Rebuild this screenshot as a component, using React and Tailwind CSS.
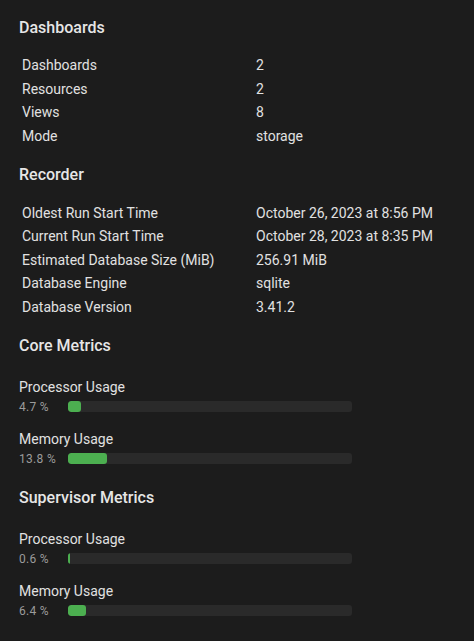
const dashboards = [
  ['Dashboards', '2'],
  ['Resources', '2'],
  ['Views', '8'],
  ['Mode', 'storage'],
]

const recorder = [
  ['Oldest Run Start Time', 'October 26, 2023 at 8:56 PM'],
  ['Current Run Start Time', 'October 28, 2023 at 8:35 PM'],
  ['Estimated Database Size (MiB)', '256.91 MiB'],
  ['Database Engine', 'sqlite'],
  ['Database Version', '3.41.2'],
]

function InfoTable({ rows }) {
  return (
    <div className="pl-[3px]">
      {rows.map(([label, value]) => (
        <div key={label} className="flex h-[23.5px] items-center text-[14px] text-[#e1e1e1]">
          <div className="w-[234px] shrink-0">{label}</div>
          <div>{value}</div>
        </div>
      ))}
    </div>
  )
}

function Metric({ label, value }) {
  return (
    <div className="h-[52px]">
      <div className="h-5 text-[14px] leading-5 text-[#e1e1e1]">{label}</div>
      <div className="flex h-5 items-center">
        <div className="w-[49px] shrink-0 text-[12px] tracking-[0.3px] text-[#9b9b9b]">{value.toFixed(1)} %</div>
        <div className="-mt-px h-[11px] w-[284px] overflow-hidden rounded-[3px] bg-[#2a2a2a]">
          <div className="h-full rounded-[3px] bg-[#4caf50]" style={{ width: `${Math.max(value, 0.6)}%` }} />
        </div>
      </div>
    </div>
  )
}

export default function App() {
  return (
    <div
      className="min-h-[641px] w-full bg-[#1c1c1c] px-[19px] pt-[16px]"
      style={{ fontFamily: 'Roboto, "Noto Sans", sans-serif' }}
    >
      <h2 className="h-6 text-[16px] font-medium leading-6 text-[#e6e6e6]">Dashboards</h2>
      <div className="mt-[14px]">
        <InfoTable rows={dashboards} />
      </div>

      <h2 className="mt-[14.5px] h-6 text-[16px] font-medium leading-6 text-[#e6e6e6]">Recorder</h2>
      <div className="mt-[15px]">
        <InfoTable rows={recorder} />
      </div>

      <h2 className="mt-[15px] h-6 text-[16px] font-medium leading-6 text-[#e6e6e6]">Core Metrics</h2>
      <div className="mt-[19px]">
        <Metric label="Processor Usage" value={4.7} />
        <Metric label="Memory Usage" value={13.8} />
      </div>

      <h2 className="mt-[5px] h-6 text-[16px] font-medium leading-6 text-[#e6e6e6]">Supervisor Metrics</h2>
      <div className="mt-[19px]">
        <Metric label="Processor Usage" value={0.6} />
        <Metric label="Memory Usage" value={6.4} />
      </div>
    </div>
  )
}
